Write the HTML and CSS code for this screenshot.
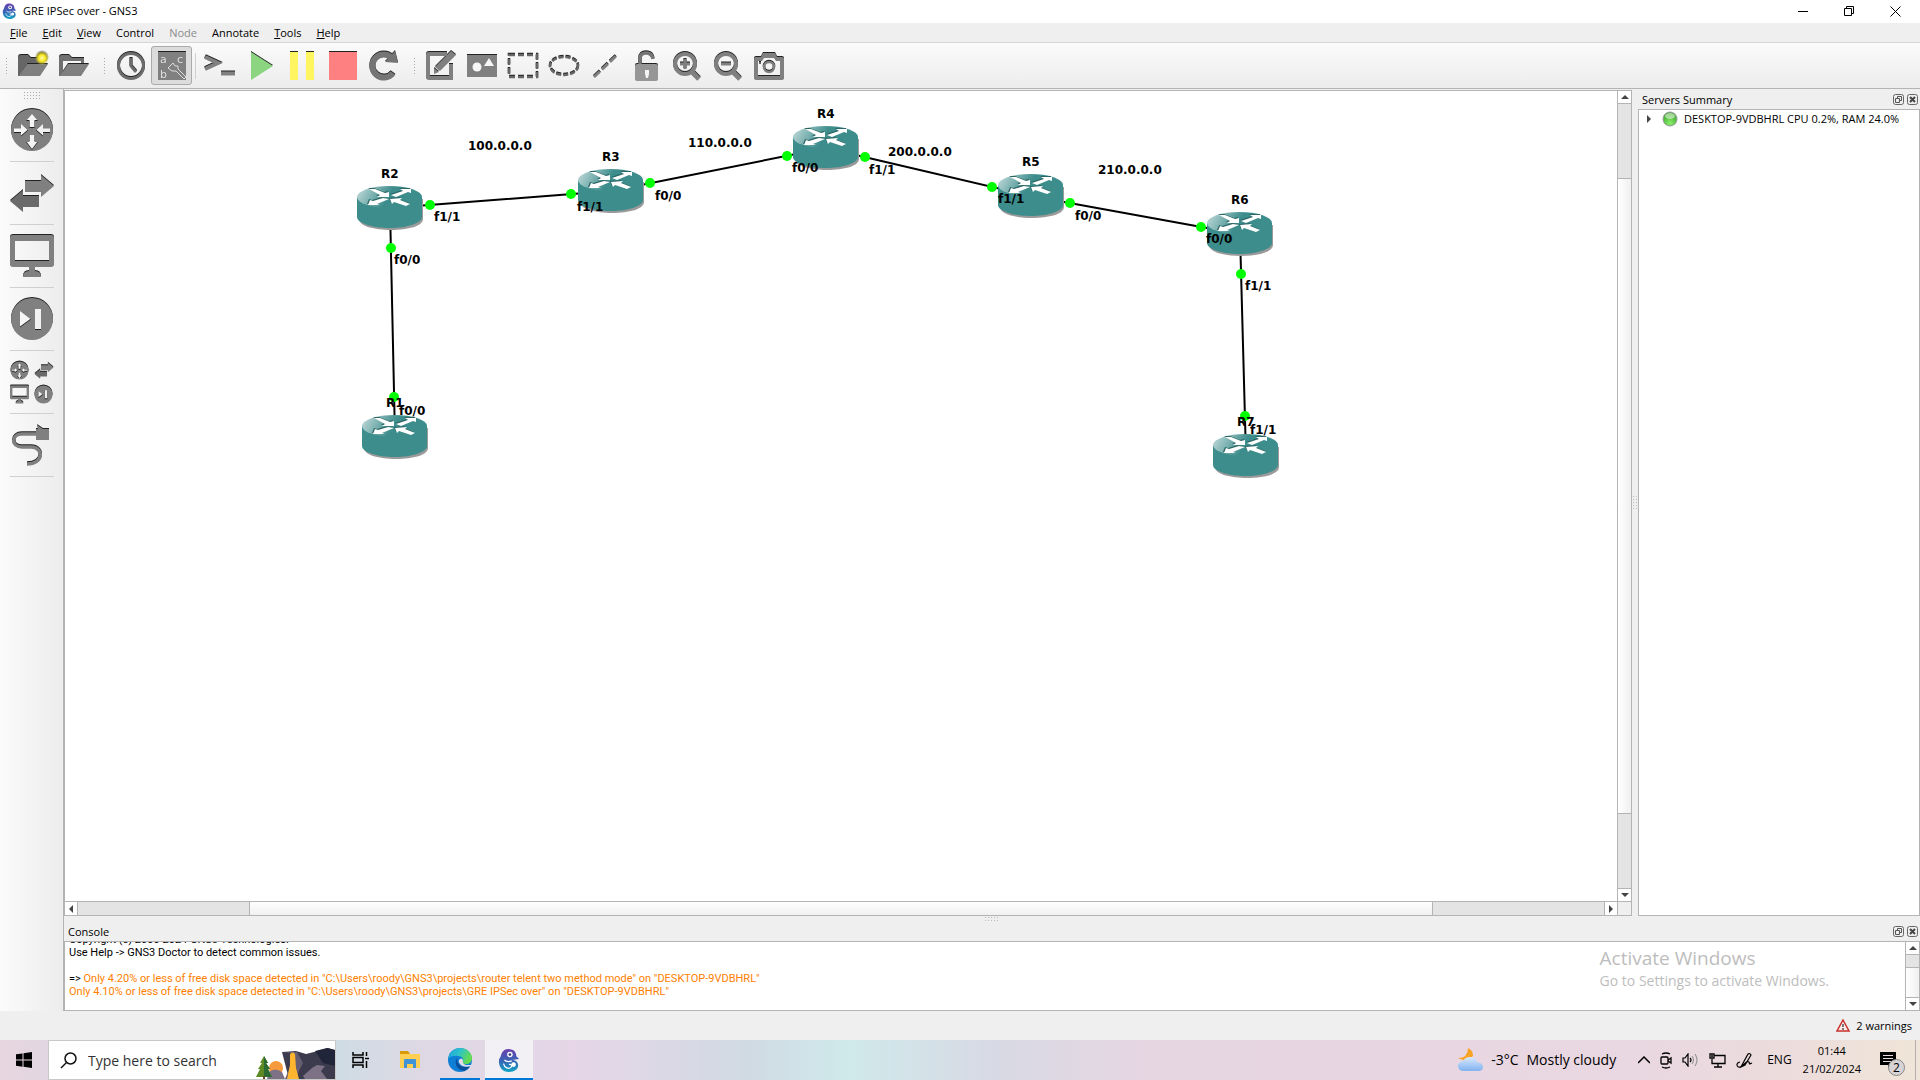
FILE: index.html
```html
<!DOCTYPE html>
<html lang="en">
<head>
    <meta charset="UTF-8">
    <meta name="viewport" content="width=device-width, initial-scale=1.0">
    <title>GRE IPSec over - GNS3</title>
    <link rel="stylesheet" href="styles.css">
</head>
<body>
    <!-- shared icons -->
    <svg class="defs" width="0" height="0" aria-hidden="true">
        <defs>
            <linearGradient id="top-shade" x1="0" y1="0.3" x2="1" y2="0.5">
                <stop offset="0" stop-color="#b9d5d5"/>
                <stop offset="0.5" stop-color="#3d8d8c"/>
            </linearGradient>
            <linearGradient id="logo-shade" x1="0" y1="0" x2="0" y2="1">
                <stop offset="0" stop-color="#6a3fb0"/>
                <stop offset="0.5" stop-color="#3b62b4"/>
                <stop offset="1" stop-color="#0fa5c4"/>
            </linearGradient>
            <linearGradient id="edge-top" x1="0" y1="0" x2="1" y2="0.4">
                <stop offset="0" stop-color="#1b9de2"/>
                <stop offset="0.5" stop-color="#2fc3c9"/>
                <stop offset="1" stop-color="#63dc4e"/>
            </linearGradient>
            <radialGradient id="led-shade" cx="0.5" cy="0.8" r="0.7">
                <stop offset="0" stop-color="#8cf06a"/>
                <stop offset="1" stop-color="#3aa52c"/>
            </radialGradient>
            <radialGradient id="spark">
                <stop offset="0" stop-color="#fffbb0"/>
                <stop offset="0.5" stop-color="#f8e71c"/>
                <stop offset="1" stop-color="#f8e71c" stop-opacity="0"/>
            </radialGradient>
            <linearGradient id="cloud-shade" x1="0" y1="0" x2="0" y2="1">
                <stop offset="0" stop-color="#d9e9fc"/>
                <stop offset="1" stop-color="#80b2f0"/>
            </linearGradient>
        </defs>
        <symbol id="router" viewBox="0 0 67 46">
            <path fill="#9a9a9a" d="M2 13v20c0 7 15 11 32 11s32-4 32-11V13z"/>
            <path fill="#3d8d8c" d="M0 11v20c0 6 15 11 32.500 11S65 37 65 31V11z"/>
            <ellipse cx="32.500" cy="11" rx="32.500" ry="11" fill="url(#top-shade)"/>
            <g fill="#2c6665" transform="translate(-1 -1)">
                <path d="M12 3h6l10 4 4-1v5H20l3-2z"/><path d="M34 9l12-4-3-2h11v4l-3-1-12 5z"/>
                <path d="M26 12l6 1-12 5 3 1H11l2-5 3 1z"/><path d="M33 13l12-1-2 2 10 4-4 2-12-4-2 2z"/>
            </g>
            <g fill="#fff">
                <path d="M12 3h6l10 4 4-1v5H20l3-2z"/><path d="M34 9l12-4-3-2h11v4l-3-1-12 5z"/>
                <path d="M26 12l6 1-12 5 3 1H11l2-5 3 1z"/><path d="M33 13l12-1-2 2 10 4-4 2-12-4-2 2z"/>
            </g>
        </symbol>
        <symbol id="logo" viewBox="0 0 24 26">
            <path fill="url(#logo-shade)" d="M11 1c7 0 9 4 9 8l3 3-8 1c4 0 7 2 7 6 0 4-4 7-10 7C5 26 1 21 1 14c0-2 1-3 2-5 1-5 4-8 8-8z"/>
            <circle cx="13" cy="7" r="3" fill="#fff"/><circle cx="13" cy="7" r="1.500" fill="#3b3f7a"/>
            <path d="M7 13c2 2 5 2 8 1M6 17c1 5 6 6 8 4s0-4-2-3" fill="none" stroke="#fff" stroke-width="1.300"/>
            <circle cx="17" cy="18" r="2.500" fill="#fff"/>
        </symbol>
        <symbol id="i-router" viewBox="0 0 44 44">
            <path fill="#808080" fill-rule="evenodd" d="M22 1a21 21 0 1 0 0 42a21 21 0 1 0 0-42zM22 6l6 7h-3.500v7h-5v-7H16zM22 42l6-8h-3.500v-7h-5v7H16zM4 20.500h7V16l7 6.500-7 6V25H4zM40 20.500h-7V16l-7 6.500 7 6V25h7z"/>
        </symbol>
        <symbol id="i-switch" viewBox="0 0 44 44">
            <path fill="#808080" d="M15 10h16V4l13 11-13 11v-5H15z"/>
            <path fill="#6a6a6a" d="M29 25H13v-6L0 30l13 11v-5h16z"/>
        </symbol>
        <symbol id="i-pc" viewBox="0 0 44 44">
            <path fill="#808080" fill-rule="evenodd" d="M3 1h38q3 0 3 3v26q0 3-3 3H25v4q6 0 6 6H13q0-6 6-6v-4H3q-3 0-3-3V4q0-3 3-3zM5 7v20h34V7z"/>
        </symbol>
        <symbol id="i-security" viewBox="0 0 44 44">
            <path fill="#808080" fill-rule="evenodd" d="M22 1a21 21 0 1 0 0 42a21 21 0 1 0 0-42zM10 14l11 8.500-11 8zM25 12h6v21h-6z"/>
        </symbol>
        <symbol id="i-float" viewBox="0 0 11 11">
            <rect x="0.500" y="0.500" width="10" height="10" rx="2" fill="#eee" stroke="#666"/>
            <path d="M2.500 4.500h4v4h-4zM4.500 4V2.500h4v4H7" fill="none" stroke="#555"/>
        </symbol>
        <symbol id="i-close" viewBox="0 0 11 11">
            <rect x="0.500" y="0.500" width="10" height="10" rx="2" fill="#eee" stroke="#666"/>
            <path d="M3 3l5 5M8 3l-5 5" stroke="#444" stroke-width="2"/>
        </symbol>
        <symbol id="a-up" viewBox="0 0 8 4"><path fill="#444" d="M0 4l4-4 4 4z"/></symbol>
        <symbol id="a-down" viewBox="0 0 8 4"><path fill="#444" d="M0 0l4 4 4-4z"/></symbol>
        <symbol id="a-left" viewBox="0 0 4 8"><path fill="#444" d="M4 0L0 4l4 4z"/></symbol>
        <symbol id="a-right" viewBox="0 0 4 8"><path fill="#444" d="M0 0l4 4-4 4z"/></symbol>
    </svg>

    <header class="titlebar">
        <svg class="app-icon" width="15" height="16"><use href="#logo"/></svg>
        <span class="title">GRE IPSec over - GNS3</span>
        <button class="win-btn" aria-label="Minimize"><svg width="11" height="11"><path d="M0 5.500h10" stroke="#000"/></svg></button>
        <button class="win-btn" aria-label="Restore"><svg width="11" height="11"><path d="M.5 2.500h7v7h-7zM2.500 2V.5h7v7H8" fill="none" stroke="#000"/></svg></button>
        <button class="win-btn" aria-label="Close"><svg width="11" height="11"><path d="M.5.5l10 10M10.500.5l-10 10" stroke="#000"/></svg></button>
    </header>

    <nav class="menubar">
        <button><u>F</u>ile</button>
        <button><u>E</u>dit</button>
        <button><u>V</u>iew</button>
        <button>Control</button>
        <button disabled>Node</button>
        <button>Annotate</button>
        <button><u>T</u>ools</button>
        <button><u>H</u>elp</button>
    </nav>

    <div class="toolbar">
        <div class="group">
            <i class="grip"></i>
            <button aria-label="New project"><svg width="32" height="32"><path fill="#666" d="M1 8q0-3 3-3h7l3 3h12v5H10L3 26H1z"/><path fill="#808080" d="M10 14h21l-8 12H2z"/><circle cx="25" cy="8" r="7" fill="url(#spark)"/></svg></button>
            <button aria-label="Open project"><svg width="32" height="32"><path fill="#707070" d="M1 8q0-3 3-3h7l3 3h12v5h-3v-2H5v14l-2 1H1z"/><path fill="#808080" d="M10 14h21l-8 12H2z"/></svg></button>
        </div>
        <div class="group">
            <i class="grip"></i>
            <button aria-label="Snapshots"><svg width="32" height="32" fill="none" stroke="#6c6c6c"><circle cx="16" cy="16" r="12.500" stroke-width="3"/><path d="M16 8v8l5 6" stroke-width="3"/></svg></button>
            <button class="pressed" aria-label="Show interface labels"><svg width="32" height="32"><rect x="2" y="2" width="28" height="28" fill="#808080"/><g class="glyphs"><text x="4" y="13">a</text><text x="21" y="13">c</text><text x="4" y="28">b</text></g><path d="M12 18l5-5 2 3h3v3l8 8-2 2-8-8h-4z" fill="none" stroke="#ddd"/></svg></button>
            <i class="sep"></i>
            <button aria-label="Console connect"><svg width="32" height="32"><path d="M1 7l13 6L1 19" fill="none" stroke="#808080" stroke-width="4"/><path d="M17 23.500h14" stroke="#808080" stroke-width="4"/></svg></button>
            <button aria-label="Start all"><svg width="32" height="32"><path fill="#8bd480" d="M6 2l22 14L6 30z"/></svg></button>
            <button aria-label="Suspend all"><svg width="32" height="32"><path fill="#fff561" d="M4 2h8v28H4zM20 2h8v28h-8z"/></svg></button>
            <button aria-label="Stop all"><svg width="32" height="32"><path fill="#ff8080" d="M2 2h28v28H2z"/></svg></button>
            <button aria-label="Reload all"><svg width="32" height="32"><path d="M25 23a11.500 11.500 0 1 1-1-15" fill="none" stroke="#757575" stroke-width="6"/><path fill="#757575" d="M27 1l3 12-13-1z"/></svg></button>
        </div>
        <div class="group">
            <i class="grip"></i>
            <button aria-label="Add a note"><svg width="32" height="32"><path d="M22 4H4q-1 0-1 1v22q0 1 1 1h22V14" fill="none" stroke="#808080" stroke-width="4"/><path fill="#808080" d="M26 1l5 4-16 16-5-4zM9 18l5 4-5 2z"/></svg></button>
            <button aria-label="Insert a picture"><svg width="32" height="32"><path fill="#808080" d="M1 5h30v22H1z"/><circle cx="11" cy="17" r="4.500" fill="#f6f6f6"/><path fill="#f6f6f6" d="M18 16l5-8 5 8z"/></svg></button>
            <button aria-label="Draw a rectangle"><svg width="32" height="32"><path d="M2 5h28v22H2z" fill="none" stroke="#666" stroke-width="2.500" stroke-dasharray="6 3"/></svg></button>
            <button aria-label="Draw an ellipse"><svg width="32" height="32"><ellipse cx="16" cy="16" rx="14" ry="9" fill="none" stroke="#666" stroke-width="2.500" stroke-dasharray="5 2"/></svg></button>
            <button aria-label="Draw a line"><svg width="32" height="32"><path d="M5 27L27 6" stroke="#808080" stroke-width="3" stroke-dasharray="8 3"/></svg></button>
            <button aria-label="Lock items"><svg width="32" height="32"><path d="M10 14V9q0-6 6-6t7 6" fill="none" stroke="#777" stroke-width="3.500"/><rect x="5" y="14" width="23" height="17" rx="2" fill="#969696"/><path fill="#f4f4f4" d="M15 20h4v4l-1 4h-2l-1-4z"/></svg></button>
            <button aria-label="Zoom in"><svg width="32" height="32" fill="none" stroke="#808080"><circle cx="14" cy="14" r="10" stroke-width="4"/><path d="M21 22l7 7" stroke-width="5"/><path d="M9 14h10M14 9v10" stroke-width="3"/></svg></button>
            <button aria-label="Zoom out"><svg width="32" height="32" fill="none" stroke="#808080"><circle cx="14" cy="14" r="10" stroke-width="4"/><path d="M21 22l7 7" stroke-width="5"/><path d="M9 14h10" stroke-width="3"/></svg></button>
            <button aria-label="Take a screenshot"><svg width="32" height="32"><path fill="#808080" fill-rule="evenodd" d="M3 7h5l2-4h12l2 4h5q2 0 2 2v19q0 2-2 2H3q-2 0-2-2V9q0-2 2-2zM5 11v15h22V11h-4l-2-3h-10l-2 3z"/><circle cx="16" cy="17" r="5" fill="none" stroke="#808080" stroke-width="2.500"/><path fill="#666" d="M6 12h2v2H6z"/></svg></button>
        </div>
    </div>

    <div class="main">
        <aside class="devices">
            <i class="grip grip-h"></i>
            <button aria-label="Routers"><svg width="44" height="44"><use href="#i-router"/></svg></button>
            <button aria-label="Switches"><svg width="44" height="44"><use href="#i-switch"/></svg></button>
            <button aria-label="End devices"><svg width="44" height="44"><use href="#i-pc"/></svg></button>
            <button aria-label="Security devices"><svg width="44" height="44"><use href="#i-security"/></svg></button>
            <button aria-label="All devices"><svg width="44" height="44"><use href="#i-router" x="0" y="1" width="19" height="19"/><use href="#i-switch" x="24" y="1" width="20" height="19"/><use href="#i-pc" x="0" y="25" width="19" height="19"/><use href="#i-security" x="24" y="25" width="19" height="19"/></svg></button>
            <button aria-label="Add a link"><svg width="44" height="44"><path d="M27 11H12C1 11 1 24 12 24h9C34 24 34 41 17 41" fill="none" stroke="#808080" stroke-width="3.500"/><path fill="#808080" d="M26 6h2l-1-4 6 4h6v11H26z"/></svg></button>
        </aside>

        <div class="workspace">
            <div class="upper">
                <section class="scene">
                    <svg class="topology" width="100%" height="100%">
                        <!-- scene coordinates start at the window corner -->
                        <g transform="translate(-65 -91)">
                            <g stroke="#000" stroke-width="2">
                                <path d="M390 208L395 437M390 208L611 191M611 191L826 148M826 148L1031 196M1031 196L1240 234M1240 234L1246 456"/>
                            </g>
                            <g fill="#0f0">
                                <circle cx="391" cy="248" r="5"/><circle cx="394" cy="397" r="5"/>
                                <circle cx="430" cy="205" r="5"/><circle cx="571" cy="194" r="5"/>
                                <circle cx="650" cy="183" r="5"/><circle cx="787" cy="156" r="5"/>
                                <circle cx="865" cy="157" r="5"/><circle cx="992" cy="187" r="5"/>
                                <circle cx="1070" cy="203" r="5"/><circle cx="1201" cy="227" r="5"/>
                                <circle cx="1241" cy="274" r="5"/><circle cx="1245" cy="416" r="5"/>
                            </g>
                            <use href="#router" x="362" y="415" width="67" height="46"/>
                            <use href="#router" x="357" y="186" width="67" height="46"/>
                            <use href="#router" x="578" y="169" width="67" height="46"/>
                            <use href="#router" x="793" y="126" width="67" height="46"/>
                            <use href="#router" x="998" y="174" width="67" height="46"/>
                            <use href="#router" x="1207" y="212" width="67" height="46"/>
                            <use href="#router" x="1213" y="434" width="67" height="46"/>
                            <g class="labels">
                                <text x="386" y="407">R1</text>
                                <text x="381" y="178">R2</text>
                                <text x="602" y="161">R3</text>
                                <text x="817" y="118">R4</text>
                                <text x="1022" y="166">R5</text>
                                <text x="1231" y="204">R6</text>
                                <text x="1237" y="426">R7</text>
                                <text x="399" y="415">f0/0</text>
                                <text x="394" y="264">f0/0</text>
                                <text x="434" y="221">f1/1</text>
                                <text x="577" y="211">f1/1</text>
                                <text x="655" y="200">f0/0</text>
                                <text x="792" y="172">f0/0</text>
                                <text x="869" y="174">f1/1</text>
                                <text x="998" y="203">f1/1</text>
                                <text x="1075" y="220">f0/0</text>
                                <text x="1206" y="243">f0/0</text>
                                <text x="1245" y="290">f1/1</text>
                                <text x="1250" y="434">f1/1</text>
                                <text x="468" y="150">100.0.0.0</text>
                                <text x="688" y="147">110.0.0.0</text>
                                <text x="888" y="156">200.0.0.0</text>
                                <text x="1098" y="174">210.0.0.0</text>
                            </g>
                        </g>
                    </svg>
                    <div class="scroll-v">
                        <button aria-label="Scroll up"><svg width="8" height="4"><use href="#a-up"/></svg></button>
                        <i class="groove"></i><i class="handle"></i><i class="groove"></i>
                        <button aria-label="Scroll down"><svg width="8" height="4"><use href="#a-down"/></svg></button>
                    </div>
                    <div class="scroll-h">
                        <button aria-label="Scroll left"><svg width="4" height="8"><use href="#a-left"/></svg></button>
                        <i class="groove"></i><i class="handle"></i><i class="groove"></i>
                        <button aria-label="Scroll right"><svg width="4" height="8"><use href="#a-right"/></svg></button>
                    </div>
                    <i class="corner"></i>
                </section>
                <i class="splitter"></i>
                <section class="servers">
                    <div class="dock-title">
                        <span>Servers Summary</span>
                        <button aria-label="Float"><svg width="11" height="11"><use href="#i-float"/></svg></button>
                        <button aria-label="Close"><svg width="11" height="11"><use href="#i-close"/></svg></button>
                    </div>
                    <ul class="tree">
                        <li>
                            <svg width="4" height="8"><use href="#a-right"/></svg>
                            <svg width="16" height="16"><circle cx="8" cy="8" r="7" fill="url(#led-shade)" stroke="#999"/><ellipse cx="8" cy="5" rx="5" ry="3" fill="#fff" opacity="0.500"/></svg>
                            <span>DESKTOP-9VDBHRL CPU 0.2%, RAM 24.0%</span>
                        </li>
                    </ul>
                </section>
            </div>

            <section class="console">
                <i class="splitter-dots"></i>
                <div class="dock-title">
                    <span>Console</span>
                    <button aria-label="Float"><svg width="11" height="11"><use href="#i-float"/></svg></button>
                    <button aria-label="Close"><svg width="11" height="11"><use href="#i-close"/></svg></button>
                </div>
                <div class="console-body">
                    <div class="log">
                        <p>Copyright (c) 2006-2024 GNS3 Technologies.</p>
                        <p>Use Help -&gt; GNS3 Doctor to detect common issues.</p>
                        <p>&nbsp;</p>
                        <p>=&gt; <span class="warn">Only 4.20% or less of free disk space detected in "C:\Users\roody\GNS3\projects\router telent two method mode" on "DESKTOP-9VDBHRL"</span></p>
                        <p class="warn">Only 4.10% or less of free disk space detected in "C:\Users\roody\GNS3\projects\GRE IPSec over" on "DESKTOP-9VDBHRL"</p>
                    </div>
                    <div class="scroll-v">
                        <button aria-label="Scroll up"><svg width="8" height="4"><use href="#a-up"/></svg></button>
                        <i class="groove"></i><i class="handle"></i>
                        <button aria-label="Scroll down"><svg width="8" height="4"><use href="#a-down"/></svg></button>
                    </div>
                </div>
            </section>
        </div>
    </div>

    <footer class="statusbar">
        <svg width="14" height="13"><path d="M7 1l6 11H1z" fill="#fbeaea" stroke="#c9302c" stroke-width="1.500"/><path d="M7 5v3M7 9v2" stroke="#555" stroke-width="1.500"/></svg>
        <span>2 warnings</span>
    </footer>

    <div class="taskbar">
        <button class="start" aria-label="Start"><svg width="16" height="16"><path d="M0 2.300L6.500 1.400v6.200H0zM7.500 1.200L16 0v7.600H7.500zM0 8.500h6.500v6.200L0 13.700zM7.500 8.500H16V16l-8.500-1.200z"/></svg></button>
        <div class="search">
            <svg width="17" height="17" fill="none" stroke="#111" stroke-width="1.500"><circle cx="10.500" cy="6.500" r="5.500"/><path d="M6.500 10.500L1 16"/></svg>
            <input type="text" placeholder="Type here to search" aria-label="Type here to search">
            <svg class="art" width="80" height="31">
                <circle cx="21" cy="20" r="7" fill="#f79a3e"/>
                <path fill="#3c3a4d" d="M27 4l14-1 10 3 12-3 10-3 7 2v29H34z"/>
                <path fill="#655d72" d="M27 4l9 1-1 14-5 12h10l8-16-6-11z"/>
                <path fill="#20253a" d="M60 3l12-3 8 2v16l-12-3z"/>
                <path fill="#ffb52e" d="M35 6q3-3 5 0l1 14 3 11H32l3-14z"/>
                <path fill="#7d7285" d="M48 28l9-8 5-3 8 1-4 5 6 8H50zM14 24q6-5 13 0l3 7H12z"/>
                <path fill="#5d8a24" d="M9 8l4 7h-2l4 6h-2l4 8H1l4-8H3l4-6H5z"/><path fill="#2c6a33" d="M9 8l4 7h-2l4 6h-2l4 8H9z"/><path d="M9 28v3" stroke="#6b4420" stroke-width="2"/>
            </svg>
        </div>
        <button class="task" aria-label="Task view"><svg width="17" height="16" fill="none" stroke="#000" stroke-width="1.500"><path d="M1 0v3h10V0M1 16v-3h10v3M1 5.500h10v5H1zM14.500 0v4M14.500 9v7M13 6.500h4"/></svg></button>
        <button class="task" aria-label="File Explorer"><svg width="22" height="20"><path fill="#d99a0b" d="M1 1h8l2 3H1z"/><path fill="#ffcf54" d="M1 4h20v14H1z"/><path fill="#3f93d6" d="M5 10q0-1 1-1h10q1 0 1 1v8h-3v-4H8v4H5z"/></svg></button>
        <button class="task open" aria-label="Microsoft Edge"><svg width="24" height="24"><circle cx="12" cy="12" r="12" fill="#0f7fd6"/><path fill="url(#edge-top)" d="M0 11C1 4 6 0 12 0c7 0 12 5 12 10 0 4-3 6-6 6-2 0-4-1-3-2 1-3-1-6-5-6C5 7 1 9 0 11z"/><path fill="#0b4f9c" d="M9 10c-3 4-1 12 7 13 3-1 5-3 6-5-8 3-13-1-13-8z"/><path fill="#e3dbe6" d="M11 12q2-3 4 0-1 4 3 5h5l1 1q-9 2-12-2-2-2-1-4z"/></svg></button>
        <button class="task open active" aria-label="GNS3"><svg width="22" height="24"><use href="#logo"/></svg></button>

        <div class="tray">
            <button class="weather">
                <svg width="25" height="24"><path fill="#f7a325" d="M10 0q5 2 5 8l-4 4H5L0 10q10 0 10-10z"/><path fill="url(#cloud-shade)" d="M6 23q-6 0-6-5 0-4 5-5 2-4 7-4 6 0 7 5 6 1 6 5 0 4-5 4z"/></svg>
                <span>-3°C</span>
                <span>Mostly cloudy</span>
            </button>
            <button aria-label="Show hidden icons"><svg width="12" height="8" fill="none" stroke="#000" stroke-width="1.500"><path d="M0 7l6-6 6 6"/></svg></button>
            <button aria-label="Meet now"><svg width="12" height="17" fill="none" stroke="#000" stroke-width="1.300"><rect x="1" y="5" width="7" height="7" rx="1"/><path d="M8 8l3-2v5L8 9M2 2q4-2 8 0M2 15q4 2 8 0"/></svg></button>
            <button aria-label="Volume"><svg width="17" height="14" fill="none" stroke="#000" stroke-width="1.200"><path d="M1 5h2l3-4v12L3 9H1zM8 5q2 2 0 4"/><path d="M10 3q3 4 0 8M13 1q4 6 0 12" stroke="#999"/></svg></button>
            <button aria-label="Network"><svg width="17" height="15" fill="none" stroke="#000" stroke-width="1.300"><path d="M5 2.500h11v8H3V6M9 11v3M5 14h8M1 1h4v4H1zM2 3h2"/></svg></button>
            <button class="pen" aria-label="Windows Ink"><svg width="17" height="17" fill="none" stroke="#000" stroke-width="1.200"><path d="M6 13l6-11q2-1 3 1L9 13l-4 2zM4 10c-5 1-3 6 0 5 4-1 6-7 9-5 1 1-1 3 3 1"/></svg></button>
            <button class="lang">ENG</button>
            <button class="clock"><span>01:44</span><span>21/02/2024</span></button>
            <button class="notes" aria-label="Notifications"><svg width="16" height="16"><path d="M0 0h16v13h-4l-4 3v-3H0z"/><path d="M3 3.500h10M3 6.500h10M3 9.500h10" stroke="#ead9df"/></svg><span class="badge">2</span></button>
            <i class="peek"></i>
        </div>
    </div>

    <div class="watermark">
        <strong>Activate Windows</strong>
        <span>Go to Settings to activate Windows.</span>
    </div>
</body>
</html>
```
FILE: styles.css
```css
* {
    box-sizing: border-box;
}
body {
    margin: 0;
    height: 100vh;
    display: flex;
    flex-direction: column;
    overflow: hidden;
    background: #efefef;
    color: #000;
    font: 12px/16px "Open Sans", "Noto Sans", sans-serif;
}
button {
    display: flex;
    align-items: center;
    justify-content: center;
    flex: none;
    margin: 0;
    padding: 0;
    border: none;
    background: none;
    color: inherit;
    font: inherit;
}
svg {
    display: block;
    flex: none;
}
i {
    display: block;
    flex: none;
}
.defs {
    position: absolute;
}

/* title and menu */
.titlebar {
    display: flex;
    align-items: center;
    height: 23px;
    padding: 0 2px 1px;
    background: #fff;
}
.title {
    flex: 1;
    padding-left: 6px;
    font-size: 11px;
}
.win-btn {
    width: 46px;
    height: 20px;
}
.menubar {
    display: flex;
    gap: 1px;
    height: 20px;
    padding-left: 3px;
    border-bottom: 1px solid #d6d6d6;
}
.menubar button {
    padding: 0 7px;
    font-size: 11px;
}
.menubar button:disabled {
    color: #8c8c8c;
}

/* toolbar */
.toolbar {
    display: flex;
    align-items: center;
    gap: 4px;
    height: 46px;
    background: linear-gradient(#fbfbfb, #ececec);
    border-bottom: 1px solid #b4b4b4;
}
.group {
    display: flex;
    align-items: center;
}
.toolbar button {
    width: 41px;
    height: 39px;
    border: 1px solid transparent;
    border-radius: 3px;
}
.toolbar button svg,
.devices button svg {
    filter: drop-shadow(0 -1px 0 #222);
}
.toolbar .pressed {
    border-color: #aaa;
    background: #dcdcdc;
}
.glyphs {
    fill: #ddd;
    font: 11px "DejaVu Sans", sans-serif;
}
.grip {
    width: 12px;
    height: 18px;
    background: radial-gradient(circle, #aaa 1px, transparent 1px) 4px 0 / 3px 3px content-box;
    padding: 0 4px;
}
.grip-h {
    width: 18px;
    height: 8px;
    margin: 2px auto 0;
    padding: 0;
    background-position: 0 0;
}
.sep {
    width: 1px;
    height: 26px;
    margin: 0 3px;
    background: #d0d0d0;
}

/* device bar */
.main {
    flex: 1;
    display: flex;
    min-height: 0;
}
.devices {
    display: flex;
    flex-direction: column;
    flex: none;
    width: 63px;
    background: linear-gradient(90deg, #fbfbfb, #ececec);
}
.devices button {
    height: 63px;
    margin: 0 9px 0 10px;
    border-bottom: 1px solid #d0d0d0;
}

/* scene */
.workspace {
    flex: 1;
    display: flex;
    flex-direction: column;
    min-width: 0;
    border-left: 1px solid #b4b4b4;
}
.upper {
    flex: 1;
    display: flex;
    min-height: 0;
    padding-top: 1px;
}
.scene {
    flex: 1;
    display: grid;
    grid-template-columns: 1fr 14px;
    grid-template-rows: 1fr 14px;
    min-width: 0;
    border: 1px solid #b4b4b4;
    background: #fff;
}
.topology {
    min-height: 0;
    overflow: hidden;
}
.labels {
    font: bold 12px "DejaVu Sans", sans-serif;
}
.scroll-v {
    display: flex;
    flex-direction: column;
    width: 14px;
    border-left: 1px solid #b4b4b4;
}
.scroll-h {
    display: flex;
    height: 14px;
    border-top: 1px solid #b4b4b4;
}
.scroll-v button {
    height: 12px;
}
.scroll-h button {
    width: 12px;
}
.groove {
    flex: 171;
    background: #e4e4e4;
}
.handle {
    flex: 1185;
    background: linear-gradient(#fff, #f0f0f0);
    border: solid #b4b4b4;
    border-width: 0 1px;
}
.scroll-h .groove:first-of-type {
    border-left: 1px solid #b4b4b4;
}
.scroll-h .groove:last-of-type {
    border-right: 1px solid #b4b4b4;
}
.scroll-v .groove {
    flex: 74;
}
.scroll-v .groove:first-of-type {
    border-top: 1px solid #b4b4b4;
}
.scroll-v .groove:last-of-type {
    border-bottom: 1px solid #b4b4b4;
}
.scroll-v .handle {
    flex: 635;
    background: linear-gradient(90deg, #fff, #f0f0f0);
    border-width: 1px 0;
}
.corner {
    background: #efefef;
    border: solid #b4b4b4;
    border-width: 1px 0 0 1px;
}
.splitter {
    align-self: center;
    width: 6px;
    height: 16px;
    background: radial-gradient(circle, #bbb 1px, transparent 1px) 0 0 / 3px 3px;
}

/* docks */
.servers {
    display: flex;
    flex-direction: column;
    flex: none;
    width: 282px;
}
.dock-title {
    display: flex;
    align-items: center;
    gap: 3px;
    height: 19px;
    padding: 0 2px 0 4px;
    font-size: 11px;
}
.dock-title span {
    flex: 1;
}
.tree {
    flex: 1;
    margin: 0;
    padding: 0;
    border: 1px solid #b4b4b4;
    background: #fff;
    list-style: none;
}
.tree li {
    display: flex;
    align-items: center;
    height: 18px;
    padding-left: 8px;
    font-size: 11px;
    white-space: nowrap;
}
.tree li svg + svg {
    margin: 0 6px 0 11px;
}
.console {
    flex: none;
}
.splitter-dots {
    width: 16px;
    height: 6px;
    margin: 0 auto;
    background: radial-gradient(circle, #bbb 1px, transparent 1px) 0 0 / 3px 3px;
}
.console-body {
    display: flex;
    height: 70px;
    border: 1px solid #b4b4b4;
    background: #fff;
}
.log {
    flex: 1;
    display: flex;
    flex-direction: column;
    justify-content: flex-end;
    padding: 0 4px 12px;
    overflow: hidden;
    font: 11px/13px Roboto, "Noto Sans", sans-serif;
}
.log p {
    margin: 0;
    white-space: nowrap;
}
.warn {
    color: #ff8000;
}
.console .groove {
    flex: 12;
}
.console .handle {
    flex: 28;
}

/* status bar */
.statusbar {
    display: flex;
    align-items: center;
    justify-content: flex-end;
    gap: 6px;
    height: 29px;
    padding: 0 8px 0 0;
    font-size: 11px;
}

/* windows taskbar */
.taskbar {
    display: flex;
    flex: none;
    height: 40px;
    background: linear-gradient(90deg, #e6d5df 0%, #d9d8e4 7%, #d0dce4 18%, #ded8e4 22%, #e6d6e7 30%, #d0dae3 39%, #cfe9eb 44%, #d8d9e4 52%, #e6d6e2 60%, #e9d7e1 85%, #ecdcdc 93%, #f0e5d8 100%);
}
.start {
    width: 48px;
}
.search {
    position: relative;
    display: flex;
    align-items: center;
    width: 288px;
    padding-left: 11px;
    border: 1px solid #c8c8c8;
    background: #fff;
}
.search input {
    flex: 1;
    min-width: 0;
    height: 38px;
    padding: 0 0 0 11px;
    border: none;
    outline: none;
    background: none;
    color: #333;
    font: 14px "Open Sans", "Noto Sans", sans-serif;
}
.search input::placeholder {
    color: #333;
}
.art {
    position: absolute;
    right: 0;
    bottom: 0;
}
.task {
    width: 48px;
    margin-right: 2px;
    border: solid transparent;
    border-width: 2px 0;
}
.task.open {
    width: 40px;
    margin: 0 5px 0 4px;
    border-bottom-color: #0078d7;
}
.task.active {
    width: 48px;
    margin: 0;
    background: #f3f0f5;
    border-top-color: #f3f0f5;
}
.tray {
    display: flex;
    align-items: center;
    margin-left: auto;
    gap: 10px;
}
.weather {
    gap: 8px;
    margin-right: 12px;
    font-size: 14px;
}
.lang {
    padding: 0 1px 0 4px;
}
.clock {
    flex-direction: column;
    font-size: 11px;
    line-height: 18px;
}
.notes {
    position: relative;
    width: 34px;
    height: 40px;
}
.badge {
    position: absolute;
    right: 0;
    bottom: 4px;
    width: 17px;
    height: 17px;
    border: 1px solid #888;
    border-radius: 50%;
    background: #d8d4d6;
    line-height: 15px;
}
.peek {
    width: 5px;
    height: 40px;
    border-left: 1px solid #b8aeb0;
}

/* activation notice */
.watermark {
    position: absolute;
    right: 91px;
    bottom: 89px;
    display: flex;
    flex-direction: column;
    color: #bdbdbd;
    font-size: 14px;
    line-height: 20px;
    pointer-events: none;
}
.watermark strong {
    font-size: 19px;
    font-weight: normal;
    line-height: 26px;
}
```
